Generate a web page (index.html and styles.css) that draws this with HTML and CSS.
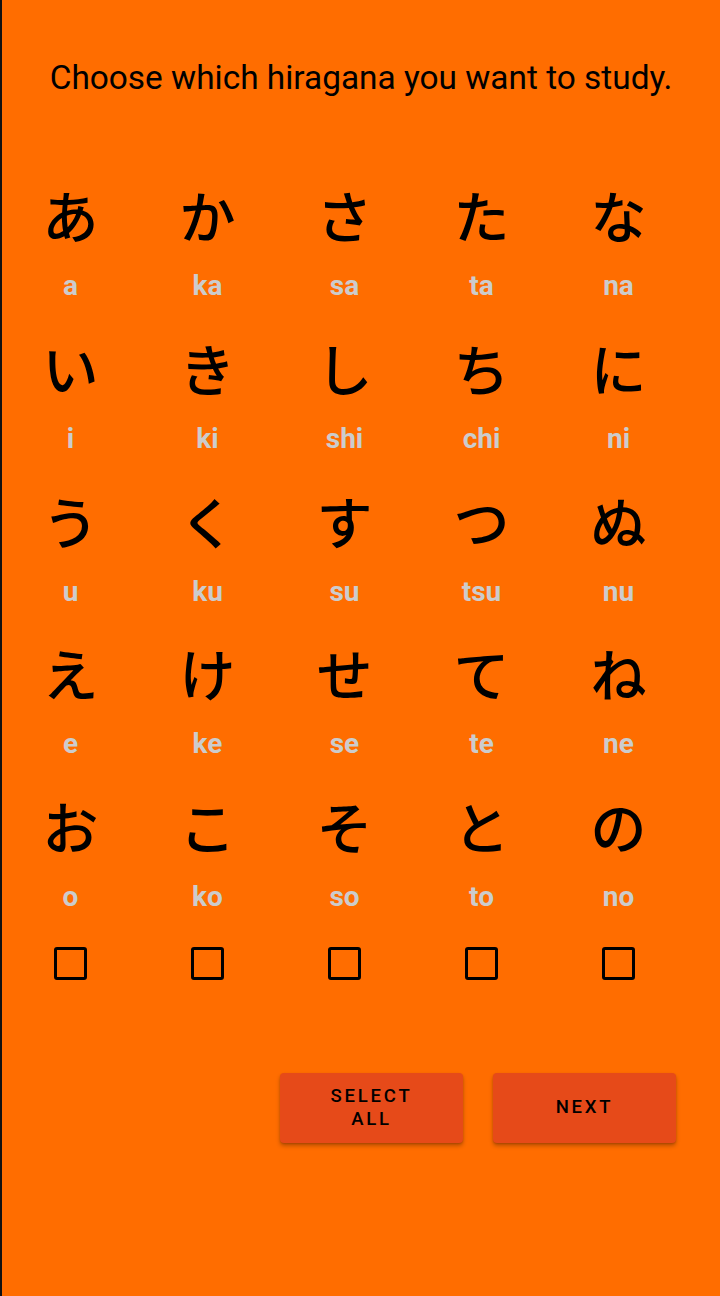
FILE: index.html
```html
<!DOCTYPE html>
<html>
<head>
<meta charset="utf-8">
<link rel="stylesheet" href="styles.css">
</head>
<body>
<div class="screen">
  <h1 class="title">Choose which hiragana you want to study.</h1>
  <div class="grid">
    <div class="cell"><span class="kana">あ</span><span class="romaji">a</span></div>
    <div class="cell"><span class="kana">か</span><span class="romaji">ka</span></div>
    <div class="cell"><span class="kana">さ</span><span class="romaji">sa</span></div>
    <div class="cell"><span class="kana">た</span><span class="romaji">ta</span></div>
    <div class="cell"><span class="kana">な</span><span class="romaji">na</span></div>
    <div class="cell"><span class="kana">い</span><span class="romaji">i</span></div>
    <div class="cell"><span class="kana">き</span><span class="romaji">ki</span></div>
    <div class="cell"><span class="kana">し</span><span class="romaji">shi</span></div>
    <div class="cell"><span class="kana">ち</span><span class="romaji">chi</span></div>
    <div class="cell"><span class="kana">に</span><span class="romaji">ni</span></div>
    <div class="cell"><span class="kana">う</span><span class="romaji">u</span></div>
    <div class="cell"><span class="kana">く</span><span class="romaji">ku</span></div>
    <div class="cell"><span class="kana">す</span><span class="romaji">su</span></div>
    <div class="cell"><span class="kana">つ</span><span class="romaji">tsu</span></div>
    <div class="cell"><span class="kana">ぬ</span><span class="romaji">nu</span></div>
    <div class="cell"><span class="kana">え</span><span class="romaji">e</span></div>
    <div class="cell"><span class="kana">け</span><span class="romaji">ke</span></div>
    <div class="cell"><span class="kana">せ</span><span class="romaji">se</span></div>
    <div class="cell"><span class="kana">て</span><span class="romaji">te</span></div>
    <div class="cell"><span class="kana">ね</span><span class="romaji">ne</span></div>
    <div class="cell"><span class="kana">お</span><span class="romaji">o</span></div>
    <div class="cell"><span class="kana">こ</span><span class="romaji">ko</span></div>
    <div class="cell"><span class="kana">そ</span><span class="romaji">so</span></div>
    <div class="cell"><span class="kana">と</span><span class="romaji">to</span></div>
    <div class="cell"><span class="kana">の</span><span class="romaji">no</span></div>
    <div class="cell check-cell"><span class="checkbox"></span></div>
    <div class="cell check-cell"><span class="checkbox"></span></div>
    <div class="cell check-cell"><span class="checkbox"></span></div>
    <div class="cell check-cell"><span class="checkbox"></span></div>
    <div class="cell check-cell"><span class="checkbox"></span></div>
  </div>
  <div class="actions">
    <button class="btn">SELECT<br>ALL</button>
    <button class="btn">NEXT</button>
  </div>
</div>
</body>
</html>
```

FILE: styles.css
```css
html, body {
  margin: 0;
  padding: 0;
  background: #FF6D00;
}
.screen {
  box-sizing: border-box;
  width: 720px;
  min-height: 1296px;
  border-left: 2px solid #111;
  background: #FF6D00;
  font-family: Roboto, "Noto Sans", sans-serif;
  color: #000;
}
.title {
  margin: 0;
  padding-top: 58px;
  font-size: 33.4px;
  line-height: 40px;
  font-weight: 400;
  text-align: center;
}
.grid {
  margin-top: 88px;
  display: grid;
  grid-template-columns: repeat(5, 137px);
  row-gap: 16.75px;
}
.cell {
  display: flex;
  flex-direction: column;
  align-items: center;
}
.kana {
  font-family: "Noto Sans CJK JP", sans-serif;
  font-size: 56px;
  font-weight: 500;
  line-height: 56px;
  height: 56px;
  margin-bottom: 8px;
}
.romaji {
  font-family: Roboto, sans-serif;
  font-weight: 700;
  font-size: 28px;
  line-height: 72px;
  color: #CCCCCC;
}
.check-cell {
  margin-top: -3px;
}
.checkbox {
  box-sizing: border-box;
  width: 33px;
  height: 33px;
  border: 3.5px solid #000;
  border-radius: 3px;
}
.actions {
  display: flex;
  justify-content: flex-end;
  gap: 30px;
  padding-right: 44px;
  margin-top: 93px;
}
.btn {
  width: 183px;
  height: 70px;
  border: none;
  border-radius: 4px;
  background: #E64A19;
  color: #000;
  font-family: Roboto, sans-serif;
  font-weight: 500;
  font-size: 18.5px;
  line-height: 23px;
  letter-spacing: 2.8px;
  box-shadow: 0 3px 4px rgba(0,0,0,0.25), 0 1px 2px rgba(0,0,0,0.15);
  padding: 0;
}
```
